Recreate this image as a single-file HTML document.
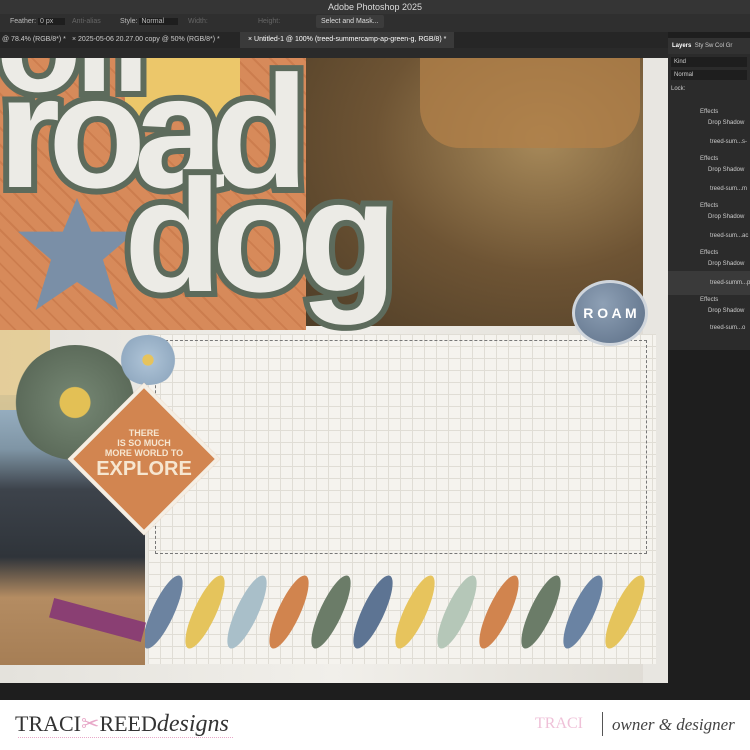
<!DOCTYPE html>
<html><head><style>
*{margin:0;padding:0;box-sizing:border-box}
body{width:750px;height:750px;overflow:hidden;background:#1e1e1e;font-family:"Liberation Sans",sans-serif;position:relative}
.a{position:absolute}
.tb{left:0;top:0;width:750px;height:14px;background:#353535;color:#ddd;font-size:9px;text-align:center;line-height:14px}
.ob{left:0;top:14px;width:750px;height:18px;background:#2f2f2f;color:#bbb;font-size:7px}
.tabs{left:0;top:32px;width:668px;height:16px;background:#262626;color:#ccc;font-size:7px;line-height:16px;white-space:nowrap;overflow:hidden}
.ruler{left:0;top:48px;width:668px;height:10px;background:#2a2a2a}
.word{font-family:"Liberation Sans",sans-serif;font-weight:bold;color:#ecebe6;line-height:1;white-space:nowrap}
.st{-webkit-text-stroke:12px #5d6b5c}
</style></head><body>
<div class="a tb">Adobe Photoshop 2025</div>
<div class="a ob"><span class="a" style="left:10px;top:4px">Feather: <span style="background:#1e1e1e;padding:0 12px 0 2px">0 px</span></span><span class="a" style="left:72px;top:4px;color:#666">Anti-alias</span><span class="a" style="left:120px;top:4px">Style: <span style="background:#1e1e1e;padding:0 14px 0 2px">Normal</span></span><span class="a" style="left:188px;top:4px;color:#666">Width:</span><span class="a" style="left:258px;top:4px;color:#666">Height:</span><span class="a" style="left:316px;top:1px;background:#3c3c3c;padding:3px 5px;border-radius:2px;color:#ddd">Select and Mask...</span></div>
<div class="a tabs"><span class="a" style="left:2px">@ 78.4% (RGB/8*) *</span><span class="a" style="left:72px">× 2025-05-06 20.27.00 copy @ 50% (RGB/8*) *</span><span class="a" style="left:240px;padding:0 8px;background:#3a3a3a;color:#fff">× Untitled-1 @ 100% (treed-summercamp-ap-green-g, RGB/8) *</span></div>
<div class="a ruler"></div>
<!-- canvas -->
<div class="a" style="left:0;top:58px;width:668px;height:625px;background:linear-gradient(90deg,#e4e2dc,#f1efea,#dedbd4)"></div>
<div class="a" style="left:0;top:58px;width:306px;height:272px;background:repeating-linear-gradient(45deg,#d78a5a 0 10px,#cc7d4e 10px 12px)"></div>
<div class="a" style="left:306px;top:58px;width:337px;height:268px;background:radial-gradient(ellipse at 70% 30%,#a88a5a,#6e5434 50%,#4e3d27);"></div>
<div class="a" style="left:420px;top:58px;width:220px;height:90px;background:#b08048;border-radius:0 0 40px 40px;opacity:.8"></div>
<div class="a" style="left:643px;top:58px;width:25px;height:625px;background:#e8e6e1"></div>
<div class="a" style="left:125px;top:58px;width:115px;height:62px;background:#ecc76a"></div>
<div class="a" style="left:18px;top:198px;width:118px;height:112px;background:#7a8fa7;clip-path:polygon(50% 0,62% 30%,100% 30%,72% 55%,85% 100%,50% 75%,15% 100%,28% 55%,0 30%,38% 30%)"></div>
<!-- big words -->
<div class="a" style="left:0;top:58px;width:310px;height:60px;overflow:hidden">
<div class="a word st" style="left:-4px;top:-85px;font-size:140px;letter-spacing:-10px">off</div>
<div class="a word" style="left:-4px;top:-85px;font-size:140px;letter-spacing:-10px">off</div>
</div>
<div class="a word st" style="left:-2px;top:52px;font-size:160px;letter-spacing:-12px">road</div>
<div class="a word" style="left:-2px;top:52px;font-size:160px;letter-spacing:-12px">road</div>
<div class="a word st" style="left:124px;top:156px;font-size:160px;letter-spacing:-10px">dog</div>
<div class="a word" style="left:124px;top:156px;font-size:160px;letter-spacing:-10px">dog</div>
<!-- grid paper -->
<div class="a" style="left:148px;top:334px;width:508px;height:330px;background-color:#f5f3ee;background-image:linear-gradient(#e0ddd5 1px,transparent 1px),linear-gradient(90deg,#e0ddd5 1px,transparent 1px);background-size:12px 12px"></div>
<div class="a" style="left:155px;top:340px;width:492px;height:214px;border:1px dashed #777"></div>
<div class="a" style="left:572px;top:280px;width:76px;height:66px;border-radius:50%;background:radial-gradient(circle at 40% 35%,#8ea0b5,#5b6e86);border:3px solid #cfd5dc;color:#fff;font-weight:bold;font-size:14px;text-align:center;line-height:60px">R O A M</div>
<div class="a" style="left:0;top:395px;width:145px;height:270px;background:linear-gradient(180deg,#9eb6c9 0,#7f95a5 20%,#3d434b 35%,#2f343a 60%,#b48c62 75%,#a67e55)"></div>
<div class="a" style="left:50px;top:610px;width:95px;height:20px;background:#8a3f73;transform:rotate(15deg)"></div>
<div class="a" style="left:0;top:330px;width:50px;height:80px;background:#e4c88a;opacity:.8"></div>
<div class="a" style="left:14px;top:345px;width:122px;height:115px;border-radius:50%;background:radial-gradient(circle,#e3c055 0 18%,#6f806d 19%,#5c6b5a 70%,transparent 71%)"></div>
<div class="a" style="left:118px;top:335px;width:60px;height:50px;border-radius:50%;background:radial-gradient(circle,#e6c35c 0 14%,#a9bfd3 15%,#93abc2 68%,transparent 70%)"></div>
<div class="a" style="left:90px;top:405px;width:108px;height:108px;background:#d28550;border:4px solid #f4eee4;transform:rotate(45deg)"></div>
<div class="a" style="left:88px;top:428px;width:112px;text-align:center;color:#f6e6d0;font-size:9px;line-height:10px;font-weight:bold">THERE<br>IS SO MUCH<br>MORE WORLD TO<br><span style="font-size:20px;line-height:22px">EXPLORE</span></div>
<svg class="a" style="left:145px;top:562px" width="515" height="100">
<ellipse cx="18" cy="50" rx="11" ry="40" transform="rotate(25 18 50)" fill="#6c83a0"/>
<ellipse cx="60" cy="50" rx="11" ry="40" transform="rotate(25 60 50)" fill="#e5c45c"/>
<ellipse cx="102" cy="50" rx="11" ry="40" transform="rotate(25 102 50)" fill="#a9bfc9"/>
<ellipse cx="144" cy="50" rx="11" ry="40" transform="rotate(25 144 50)" fill="#d1844e"/>
<ellipse cx="186" cy="50" rx="11" ry="40" transform="rotate(25 186 50)" fill="#6b7c68"/>
<ellipse cx="228" cy="50" rx="11" ry="40" transform="rotate(25 228 50)" fill="#5d7493"/>
<ellipse cx="270" cy="50" rx="11" ry="40" transform="rotate(25 270 50)" fill="#e7c45d"/>
<ellipse cx="312" cy="50" rx="11" ry="40" transform="rotate(25 312 50)" fill="#b5c7b8"/>
<ellipse cx="354" cy="50" rx="11" ry="40" transform="rotate(25 354 50)" fill="#d1844e"/>
<ellipse cx="396" cy="50" rx="11" ry="40" transform="rotate(25 396 50)" fill="#6b7c68"/>
<ellipse cx="438" cy="50" rx="11" ry="40" transform="rotate(25 438 50)" fill="#6a83a3"/>
<ellipse cx="480" cy="50" rx="11" ry="40" transform="rotate(25 480 50)" fill="#e5c45c"/>
</svg>
<div class="a" style="left:668px;top:38px;width:82px;height:312px;background:#2b2b2b;color:#ccc;font-size:6px;white-space:nowrap;overflow:hidden">
<div style="height:16px;line-height:16px;padding-left:4px;background:#323232"><b style="color:#fff">Layers</b> &nbsp;Sty Sw Col Gr</div>
<div style="margin:3px 3px;height:10px;background:#1e1e1e;padding-left:3px;line-height:10px">Kind</div>
<div style="margin:3px 3px;height:10px;background:#1e1e1e;padding-left:3px;line-height:10px">Normal</div>
<div style="padding-left:3px;height:12px;line-height:12px">Lock:</div>
<div style="line-height:11.5px;padding-left:8px">
<div>&nbsp;</div>
<div style="padding-left:24px">Effects</div><div style="padding-left:32px">Drop Shadow</div>
<div style="padding-left:34px;line-height:24px">treed-sum...s-</div>
<div style="padding-left:24px">Effects</div><div style="padding-left:32px">Drop Shadow</div>
<div style="padding-left:34px;line-height:24px">treed-sum...m</div>
<div style="padding-left:24px">Effects</div><div style="padding-left:32px">Drop Shadow</div>
<div style="padding-left:34px;line-height:24px">treed-sum...ac</div>
<div style="padding-left:24px">Effects</div><div style="padding-left:32px">Drop Shadow</div>
<div style="padding-left:34px;line-height:24px;background:#3a3a3a;margin-left:-8px;padding-left:42px">treed-summ...p</div>
<div style="padding-left:24px">Effects</div><div style="padding-left:32px">Drop Shadow</div>
<div style="padding-left:34px;line-height:20px">treed-sum...o</div>
</div></div>
<div class="a" style="left:0;top:700px;width:750px;height:50px;background:#fff"></div>
<div class="a" style="left:15px;top:711px;font-family:'Liberation Serif',serif;font-size:22px;color:#333">TRACI<span style="color:#e8a8c8">✂</span>REED<i style="font-size:24px">designs</i></div>
<div class="a" style="left:18px;top:737px;width:215px;border-top:1px dotted #e8a8c8"></div>
<div class="a" style="left:535px;top:715px;font-family:'Liberation Serif',serif;font-size:16px;color:#efc1d8">TRACI</div>
<div class="a" style="left:602px;top:712px;width:1px;height:24px;background:#555"></div>
<div class="a" style="left:612px;top:715px;font-family:'Liberation Serif',serif;font-style:italic;font-size:17px;color:#444">owner &amp; designer</div>
</body></html>
